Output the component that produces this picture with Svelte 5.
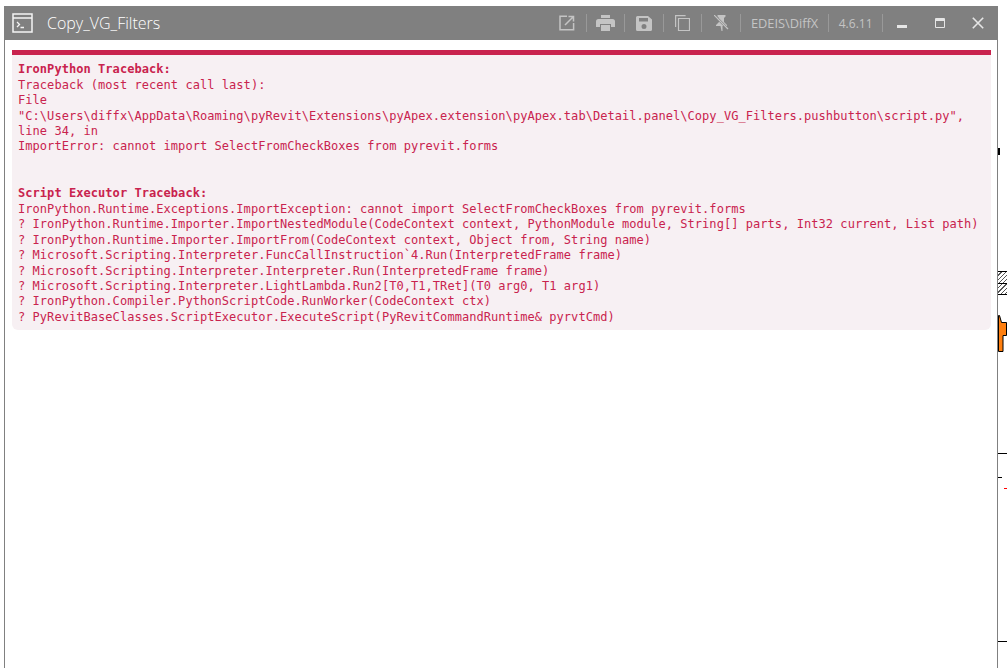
<script>
	const frames = [
		'? IronPython.Runtime.Importer.ImportNestedModule(CodeContext context, PythonModule module, String[] parts, Int32 current, List path)',
		'? IronPython.Runtime.Importer.ImportFrom(CodeContext context, Object from, String name)',
		'? Microsoft.Scripting.Interpreter.FuncCallInstruction`4.Run(InterpretedFrame frame)',
		'? Microsoft.Scripting.Interpreter.Interpreter.Run(InterpretedFrame frame)',
		'? Microsoft.Scripting.Interpreter.LightLambda.Run2[T0,T1,TRet](T0 arg0, T1 arg1)',
		'? IronPython.Compiler.PythonScriptCode.RunWorker(CodeContext ctx)',
		'? PyRevitBaseClasses.ScriptExecutor.ExecuteScript(PyRevitCommandRuntime& pyrvtCmd)'
	];
</script>

<div class="backdrop" aria-hidden="true">
	<span class="tick" style="top:148px;left:0;width:2px;height:7px"></span>
	<span class="hatch"></span>
	<svg class="valve" width="9" height="38" viewBox="0 0 9 38">
		<path d="M.5 .5h1l2 7h5v13h-3.500v16h-4.500z" fill="#ff7f0f" stroke="#000" />
	</svg>
	<span class="tick" style="top:453px;left:0;width:9px;height:1px"></span>
	<span class="tick" style="top:477px;left:0;width:4px;height:1px"></span>
	<span class="tick red" style="top:488px;left:6px;width:3px;height:1px"></span>
	<span class="tick" style="top:641px;left:0;width:9px;height:1px"></span>
</div>

<div class="window">
	<header class="titlebar">
		<svg class="app-icon" width="21" height="20" viewBox="0 0 21 20" fill="none" stroke="#f4f4f4">
			<rect x="1" y="1" width="19" height="18" stroke-width="1.500" />
			<path d="M1 5h19" stroke-width="1.500" />
			<path d="M5 9l2.500 2.500L5 14M8.500 14.500h3.500" stroke-width="1.300" />
		</svg>
		<span class="title">Copy_VG_Filters</span>

		<div class="tools">
			<button class="tool" aria-label="Open">
				<svg width="16" height="16" viewBox="0 0 16 16" fill="none" stroke="currentColor" stroke-width="1.500">
					<path d="M8 1.200H1v13.600h13.600V8M6 10l8-8M9.500 1.500h5v5" />
				</svg>
			</button>
			<button class="tool" aria-label="Print">
				<svg width="19" height="16" viewBox="0 0 19 16" fill="currentColor">
					<path d="M5 0h9v3H5zM2.500 4h14A2.500 2.500 0 0 1 19 6.500V12h-4V9H4v3H0V6.500A2.500 2.500 0 0 1 2.500 4zM5 10h9v6H5z" />
				</svg>
			</button>
			<button class="tool" aria-label="Save">
				<svg width="16" height="15" viewBox="0 0 16 15" fill="currentColor">
					<path fill-rule="evenodd" d="M1.500 0H12l4 3.500v10A1.500 1.500 0 0 1 14.500 15h-13A1.500 1.500 0 0 1 0 13.500v-12A1.500 1.500 0 0 1 1.500 0zM3 2v3.500h9V2zM8 8a2.500 2.500 0 1 0 0 5 2.500 2.500 0 0 0 0-5z" />
				</svg>
			</button>
			<button class="tool" aria-label="Copy">
				<svg width="15" height="16" viewBox="0 0 15 16" fill="none" stroke="currentColor" stroke-width="1.200">
					<path d="M3.500 3.500h11v12h-11zM.6 12V.6h10" />
				</svg>
			</button>
			<button class="tool" aria-label="Pin">
				<svg width="15" height="16" viewBox="0 0 15 16" fill="currentColor">
					<path d="M3.500 0h8v1.500L10 3v4l3 3v1H8.500v5h-1l-1-5H2v-1l3-3V3L3.500 1.500z" />
					<path d="M1 1l13 13" stroke="#808080" stroke-width="2.400" />
					<path d="M0 0l14 14" stroke="currentColor" stroke-width="1.200" />
				</svg>
			</button>
			<span class="tool label">EDEIS\DiffX</span>
			<span class="tool label version">4.6.11</span>
		</div>

		<div class="controls">
			<button class="control" aria-label="Minimize">
				<svg width="10" height="10" viewBox="0 0 10 10" fill="currentColor"><path d="M0 7h10v3H0z" /></svg>
			</button>
			<button class="control" aria-label="Maximize">
				<svg width="10" height="10" viewBox="0 0 10 10" fill="none" stroke="currentColor"><path d="M.5 .5h9v9h-9z" /><path d="M0 2h10" stroke-width="2" /></svg>
			</button>
			<button class="control" aria-label="Close">
				<svg width="12" height="12" viewBox="0 0 12 12" fill="none" stroke="currentColor" stroke-width="1.600"><path d="M.8 .8l10.400 10.400M11.200 .8L.8 11.200" /></svg>
			</button>
		</div>
	</header>

	<main class="output">
		<section class="error">
			<strong>IronPython Traceback:</strong>
			<div>Traceback (most recent call last):</div>
			<div>File</div>
			<div>"C:\Users\diffx\AppData\Roaming\pyRevit\Extensions\pyApex.extension\pyApex.tab\Detail.panel\Copy_VG_Filters.pushbutton\script.py",</div>
			<div>line 34, in</div>
			<div>ImportError: cannot import SelectFromCheckBoxes from pyrevit.forms</div>
			<div class="gap"></div>
			<strong>Script Executor Traceback:</strong>
			<div>IronPython.Runtime.Exceptions.ImportException: cannot import SelectFromCheckBoxes from pyrevit.forms</div>
			{#each frames as frame}
				<div>{frame}</div>
			{/each}
		</section>
	</main>
</div>

<style>
	:global(body) {
		margin: 0;
		background: #fff;
		overflow: hidden;
	}

	.backdrop {
		position: absolute;
		top: 0;
		left: 998px;
		width: 9px;
		height: 668px;
		overflow: hidden;
	}

	.tick {
		position: absolute;
		background: #000;
	}

	.tick.red {
		background: #f00;
	}

	.hatch {
		position: absolute;
		top: 271px;
		left: 0;
		width: 9px;
		height: 24px;
		box-sizing: border-box;
		border-top: 1px solid #000;
		border-bottom: 1px solid #000;
		background:
			linear-gradient(#000, #000) 0 11px / 100% 1px no-repeat,
			repeating-linear-gradient(135deg, #fff 0 2px, #555 2px 3px);
	}

	.valve {
		position: absolute;
		top: 315px;
		left: 0;
	}

	.window {
		box-sizing: border-box;
		width: 994px;
		height: 662px;
		margin: 6px 0 0 4px;
		border: 1px solid #808080;
		border-width: 0 1px;
		font-family: "Open Sans", sans-serif;
	}

	.titlebar {
		display: flex;
		align-items: center;
		height: 34px;
		margin: 0 -1px;
		background: #808080;
		color: #c8c8c8;
	}

	.app-icon {
		margin-left: 8px;
		flex-shrink: 0;
	}

	.title {
		margin-left: 14px;
		font-size: 16px;
		font-weight: 300;
		color: #fff;
	}

	.tools {
		display: flex;
		align-items: center;
		margin-left: auto;
	}

	.tool {
		display: flex;
		align-items: center;
		justify-content: center;
		box-sizing: border-box;
		width: 38.500px;
		height: 18px;
		padding: 0;
		border: 0;
		border-right: 1px solid #999;
		background: none;
		color: #c4c4c4;
	}

	.label {
		width: auto;
		padding: 0 10px;
		font-size: 12.800px;
		color: #c4c4c4;
	}

	.version {
		padding: 0 9.500px;
		font-size: 12px;
	}

	.controls {
		display: flex;
		align-items: center;
		padding-right: 1px;
	}

	.control {
		display: flex;
		align-items: center;
		justify-content: center;
		width: 38px;
		height: 24px;
		padding: 0;
		border: 0;
		background: none;
		color: #e6e6e6;
	}

	.output {
		padding: 10px 6px 0 7px;
	}

	.error {
		padding: 7.400px 6px 4.400px;
		border-top: 5px solid #c9234e;
		border-radius: 0 0 6px 6px;
		background: #f7f0f3;
		color: #c9234e;
		font-family: "DejaVu Sans Mono", monospace;
		font-size: 12px;
		letter-spacing: 0.053px;
		line-height: 15.400px;
	}

	.error strong,
	.error div {
		display: block;
		white-space: nowrap;
	}

	.gap {
		height: 31.650px;
	}
</style>
